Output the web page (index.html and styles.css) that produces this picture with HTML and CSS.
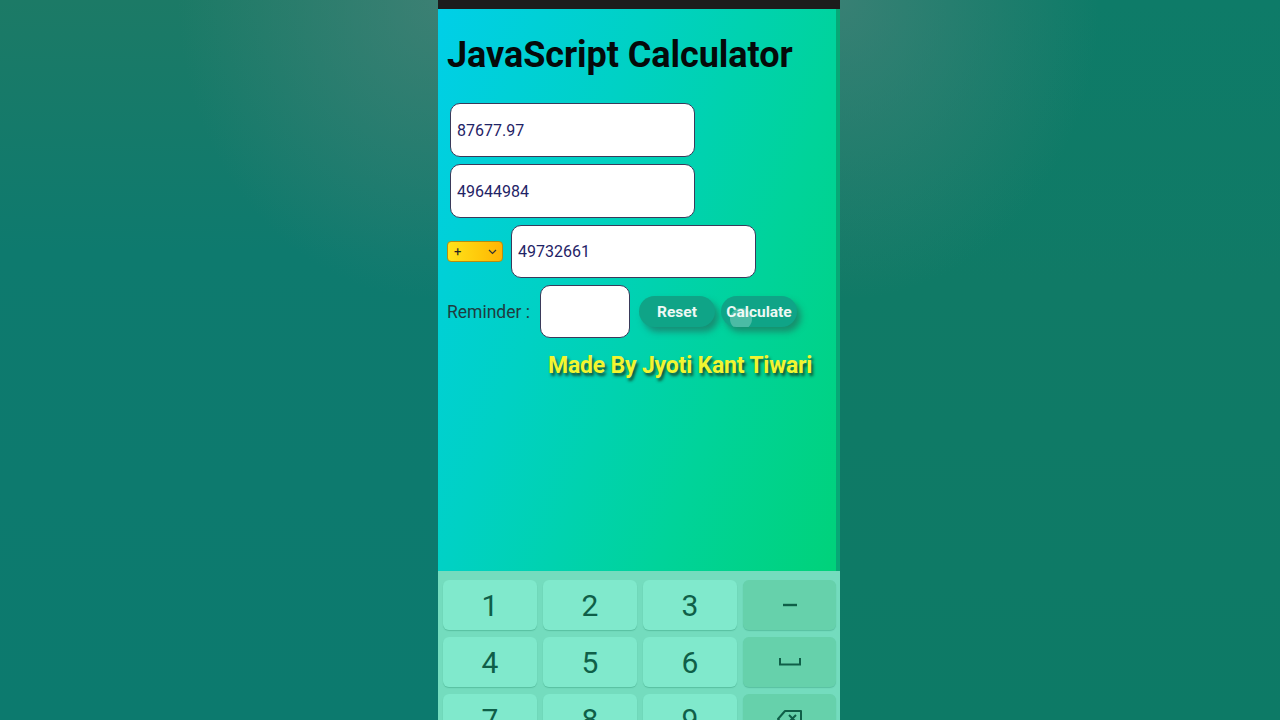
FILE: index.html
```html
<!DOCTYPE html>
<html>
<head>
<meta charset="utf-8">
<link rel="stylesheet" href="styles.css">
</head>
<body>
<div class="page">
  <div class="side side-left"></div>
  <div class="phone">
    <div class="statusbar"></div>
    <div class="screen">
      <h1 class="title">JavaScript Calculator</h1>
      <div class="row"><div class="field">87677.97</div></div>
      <div class="row"><div class="field">49644984</div></div>
      <div class="row row-op">
        <div class="select"><span>+</span>
          <svg class="chev" width="9" height="6" viewBox="0 0 9 6"><path d="M1 1 L4.5 4.5 L8 1" fill="none" stroke="#333" stroke-width="1.2"/></svg>
        </div>
        <div class="field">49732661</div>
      </div>
      <div class="row row-rem">
        <span class="label">Reminder :</span>
        <div class="field small"></div>
        <div class="btn">Reset</div>
        <div class="btn btn-calc">Calculate<span class="ripple"></span></div>
      </div>
      <div class="credit">Made By Jyoti Kant Tiwari</div>
    </div>
    <div class="keyboard">
      <div class="key">1</div>
      <div class="key">2</div>
      <div class="key">3</div>
      <div class="key special"><svg width="14" height="4" viewBox="0 0 14 4"><rect x="0" y="0.8" width="14" height="2.4" fill="#0f5f48"/></svg></div>
      <div class="key">4</div>
      <div class="key">5</div>
      <div class="key">6</div>
      <div class="key special"><svg width="22" height="8" viewBox="0 0 22 8"><path d="M1 0 V6.5 H21 V0" fill="none" stroke="#0f5f48" stroke-width="2"/></svg></div>
      <div class="key">7</div>
      <div class="key">8</div>
      <div class="key">9</div>
      <div class="key special"><svg width="26" height="18" viewBox="0 0 26 18"><path d="M8 1 H24 V17 H8 L1 9 Z" fill="none" stroke="#0f5f48" stroke-width="2" stroke-linejoin="round"/><path d="M12 5 L19 12 M19 5 L12 12" stroke="#0f5f48" stroke-width="2"/></svg></div>
    </div>
  </div>
  <div class="side side-right"></div>
</div>
</body>
</html>
```

FILE: styles.css
```css
* { box-sizing: border-box; }
html, body { margin: 0; padding: 0; }
body {
  width: 1280px;
  height: 720px;
  overflow: hidden;
  font-family: Roboto, "Liberation Sans", sans-serif;
  background: #0c7a6c;
}
.page {
  display: grid;
  grid-template-columns: 438px 402px 1fr;
  height: 720px;
}
.side-left {
  background:
    radial-gradient(ellipse 260px 300px at 100% 0%, rgba(70,130,120,0.75), rgba(70,130,120,0) 100%),
    linear-gradient(180deg, #1c7a66 0%, #0e7a6e 35%, #0c7a6e 100%);
}
.side-right {
  background:
    radial-gradient(ellipse 260px 300px at 0% 0%, rgba(70,130,120,0.75), rgba(70,130,120,0) 100%),
    linear-gradient(180deg, #0e7b68 0%, #107a66 40%, #0d7a66 100%);
}
.phone {
  display: flex;
  flex-direction: column;
  height: 720px;
}
.statusbar {
  height: 9px;
  background: #1d1c1c;
  flex: none;
}
.screen {
  flex: 1;
  background: linear-gradient(110deg, #00cfe8 0%, #00d1c4 35%, #00d39a 70%, #00d27a 100%);
  border-right: 4px solid #07a876;
  padding: 0 0 0 9px;
}
.title {
  margin: 25px 0 0 0;
  font-size: 36px;
  line-height: 42px;
  font-weight: 700;
  color: #050a0a;
  letter-spacing: -0.05px;
}
.row {
  display: flex;
  align-items: center;
  margin-left: 3px;
}
.title + .row { margin-top: 27px; }
.row + .row { margin-top: 7px; }
.field {
  width: 245px;
  height: 54px;
  background: #fff;
  border: 1px solid #3a3a5a;
  border-radius: 10px;
  padding-left: 6px;
  display: flex;
  align-items: center;
  font-size: 16px;
  color: #1f2366;
}
.row.row-op { margin-left: 0; margin-top: 7px; }
.select {
  width: 56px;
  height: 21px;
  border-radius: 4px;
  border: 1px solid #b58e10;
  background: linear-gradient(90deg, #ffe21a 0%, #ffc80a 60%, #ffb404 100%);
  display: flex;
  align-items: center;
  justify-content: space-between;
  padding: 0 5px 0 6px;
  font-size: 13px;
  color: #222;
  margin-right: 8px;
}
.chev { margin-top: 1px; }
.row-op .field { height: 53px; }
.row.row-rem { margin-left: 0; margin-top: 7px; }
.label {
  font-size: 17.5px;
  color: #1f3c40;
  width: 93px;
}
.field.small {
  width: 90px;
  height: 53px;
  margin-right: 9px;
}
.btn {
  position: relative;
  width: 76px;
  height: 31px;
  border-radius: 16px;
  background: #0fa487;
  color: #eef8f4;
  font-weight: 700;
  font-size: 15.5px;
  display: flex;
  align-items: center;
  justify-content: center;
  box-shadow: 4px 5px 6px rgba(40,90,80,0.55);
  overflow: hidden;
  white-space: nowrap;
}
.btn + .btn { margin-left: 6px; }
.ripple {
  position: absolute;
  left: 9px;
  top: 12px;
  width: 22px;
  height: 22px;
  border-radius: 50%;
  background: rgba(255,255,255,0.25);
}
.credit {
  margin: 14px 0 0 101px;
  font-size: 23px;
  font-weight: 700;
  color: #f2f530;
  text-shadow: 2px 3px 3px rgba(20,60,30,0.85);
  letter-spacing: -0.2px;
  white-space: nowrap;
}
.keyboard {
  height: 149px;
  flex: none;
  background: #74dcbe;
  padding: 9px 4px 0 5px;
  display: grid;
  grid-template-columns: 94px 94px 94px 93px;
  grid-auto-rows: 50px;
  column-gap: 6px;
  row-gap: 7px;
  overflow: hidden;
}
.key {
  background: #80e9cc;
  border-radius: 6px;
  box-shadow: 0 1px 1px rgba(40,140,110,0.35);
  display: flex;
  align-items: center;
  justify-content: center;
  font-size: 30px;
  color: #0f5f48;
}
.key.special { background: #66d1ab; }
```
